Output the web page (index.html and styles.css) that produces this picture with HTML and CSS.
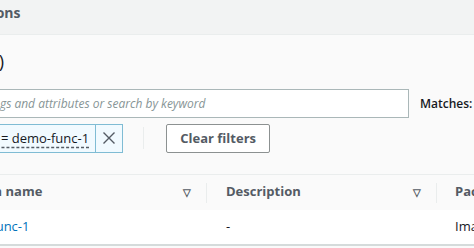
FILE: index.html
```html
<!DOCTYPE html>
<html lang="en">
<head>
  <meta charset="UTF-8">
  <title>Functions</title>
  <link rel="stylesheet" href="styles.css">
</head>
<body>

  <div class="page">
    <div class="topbar">
      <h2>Functions</h2>
    </div>

    <div class="panel">
      <h1 class="title">Functions (1)</h1>

      <div class="search-row">
        <div class="search-box">
          <input type="text" placeholder="Filter by tags and attributes or search by keyword">
        </div>
        <span class="matches">Matches:</span>
      </div>

      <div class="token-row">
        <div class="token">
          <span class="token-label">Function name = demo-func-1</span>
          <button class="token-close" aria-label="Remove">
            <svg width="14" height="14" viewBox="0 0 14 14">
              <path d="M1.5 1.5 L12.5 12.5 M12.5 1.5 L1.5 12.5" stroke="#545b64" stroke-width="1.4" fill="none"/>
            </svg>
          </button>
        </div>
        <span class="sep"></span>
        <button class="btn">Clear filters</button>
      </div>

      <table class="table">
        <thead>
          <tr>
            <th class="col-name"><span>Function name</span><i class="sort">&#9661;</i></th>
            <th class="col-desc"><span>Description</span><i class="sort">&#9661;</i></th>
            <th class="col-pkg"><span>Package type</span></th>
          </tr>
        </thead>
        <tbody>
          <tr>
            <td class="col-name"><a href="#">demo-func-1</a></td>
            <td class="col-desc">-</td>
            <td class="col-pkg">Image</td>
          </tr>
        </tbody>
      </table>
    </div>
  </div>

</body>
</html>
```

FILE: styles.css
```css
* {
  margin: 0;
  padding: 0;
  box-sizing: border-box;
}

body {
  font-family: 'Open Sans', sans-serif;
  font-size: 13px;
  color: #16191f;
  background-color: #fafafa;
  overflow: hidden;
}

.page {
  margin-left: -104px;
  width: 700px;
}

/* Barra superior */
.topbar {
  background-color: #f2f3f3;
  border-bottom: 1px solid #eaeded;
  height: 35px;
  padding: 3px 0 0 56px;
}

.topbar h2 {
  font-size: 14px;
  font-weight: 700;
  color: #545b64;
}

.panel {
  background-color: #fafafa;
  padding-top: 14px;
}

.title {
  font-size: 18px;
  font-weight: 400;
  color: #16191f;
  padding-left: 1px;
  height: 40px;
}

.search-row {
  display: flex;
  align-items: center;
  gap: 11px;
}

.search-box {
  width: 513px;
  height: 29px;
  border: 1px solid #aab7b8;
  background-color: #fff;
  display: flex;
  align-items: center;
  padding-left: 47px;
}

.search-box input {
  border: none;
  outline: none;
  background: transparent;
  font-family: 'Open Sans', sans-serif;
  font-size: 12px;
  width: 100%;
}

.search-box input::placeholder {
  color: #879596;
  font-style: italic;
}

.matches {
  font-size: 12px;
  font-weight: 600;
  color: #16191f;
}

.token-row {
  display: flex;
  align-items: center;
  margin-top: 5px;
  height: 30px;
}

.token {
  display: flex;
  align-items: stretch;
  height: 29px;
  background-color: #f1faff;
  border: 1px solid #7fbcd4;
}

.token-label {
  padding: 0 6px 0 10px;
  line-height: 27px;
  text-decoration: underline dashed #545b64;
  text-underline-offset: 4px;
  color: #16191f;
  border-right: 1px solid #7fbcd4;
}

.token-close {
  width: 26px;
  border: none;
  background: transparent;
  display: flex;
  align-items: center;
  justify-content: center;
}

.sep {
  width: 1px;
  height: 22px;
  background-color: #eaeded;
  margin: 0 22px 0 20px;
}

.btn {
  height: 29px;
  width: 104px;
  background-color: #fff;
  border: 1px solid #8c9191;
  border-radius: 2px;
  font-family: 'Open Sans', sans-serif;
  font-size: 13px;
  font-weight: 700;
  color: #545b64;
}

/* Tabela */
.table {
  margin-top: 21px;
  border-collapse: collapse;
  width: 700px;
  table-layout: fixed;
}

.table th {
  background-color: #fafafa;
  border-top: 1px solid #eaeded;
  height: 35px;
  padding-bottom: 3px;
  text-align: left;
  font-weight: 700;
  color: #545b64;
  position: relative;
}

.table td {
  background-color: #fff;
  height: 35px;
  padding-bottom: 2px;
  border-bottom: 2px solid #d5dbdb;
  color: #16191f;
}

.col-name { width: 311px; }
.table th.col-name { padding-left: 49px; }
.table td.col-name { padding-left: 56px; }
.col-desc { width: 230px; padding-left: 19px; }
.col-pkg { padding-left: 18px; }

.table th.col-name::after,
.table th.col-desc::after {
  content: "";
  position: absolute;
  right: 0;
  top: 8px;
  height: 20px;
  width: 1px;
  background-color: #eaeded;
}

.sort {
  font-style: normal;
  font-size: 10px;
  color: #545b64;
  position: absolute;
  right: 16px;
  top: 10px;
}

.table a {
  color: #0073bb;
  text-decoration: none;
}
```
